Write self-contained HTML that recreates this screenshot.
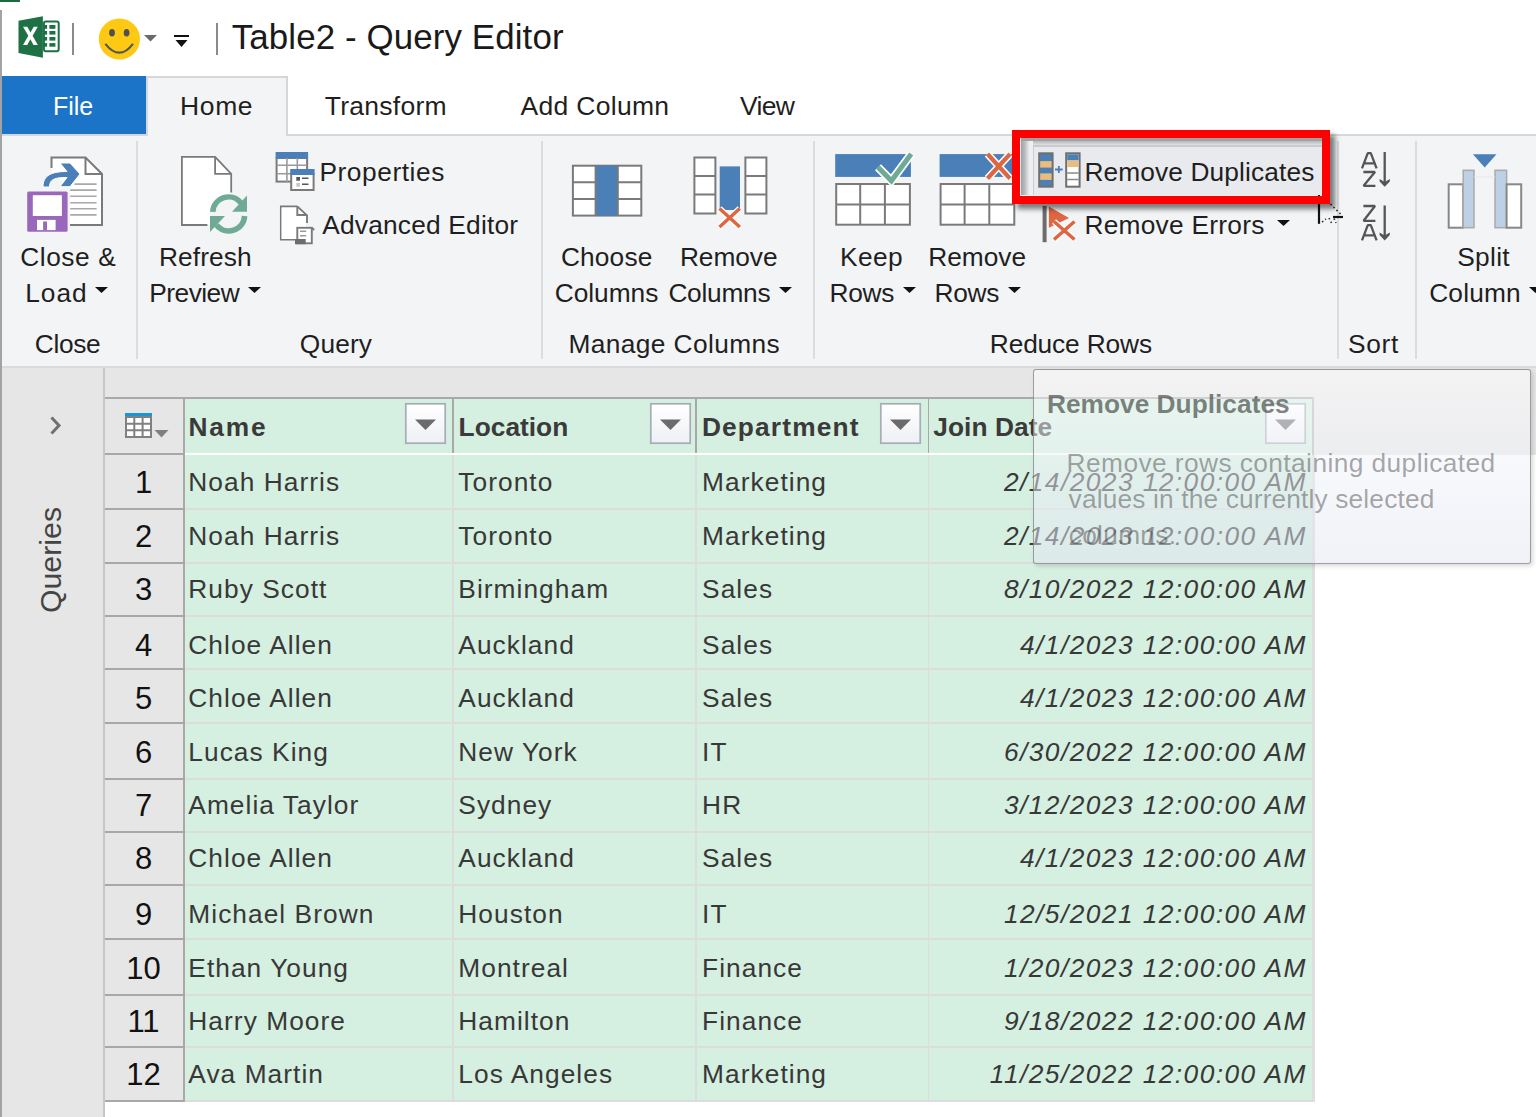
<!DOCTYPE html><html><head><meta charset="utf-8"><style>
html,body{margin:0;padding:0;}
body{width:1536px;height:1117px;overflow:hidden;position:relative;background:#fff;font-family:"Liberation Sans", sans-serif;}
.t{position:absolute;white-space:nowrap;line-height:1;}
.r{position:absolute;}
svg.r{overflow:visible;}
</style></head><body>
<div class="r" style="left:0.0px;top:0.0px;width:1536.0px;height:76.0px;background:#ffffff;"></div>
<div class="r" style="left:0.0px;top:0.0px;width:20.0px;height:2.0px;background:#1d6b3c;"></div>
<svg class="r" style="left:14.0px;top:12.0px;" width="50" height="50" viewBox="0 0 50 50">
<rect x="29.9" y="9.5" width="14.8" height="29.7" rx="2" fill="#fff" stroke="#1e7145" stroke-width="2"/>
<g fill="#1e7145">
<rect x="28.9" y="13" width="4.2" height="3.8"/><rect x="35.4" y="13" width="6" height="3.8"/>
<rect x="28.9" y="19" width="4.2" height="3.6"/><rect x="35.4" y="19" width="6" height="3.6"/>
<rect x="28.9" y="25" width="4.2" height="3.6"/><rect x="35.4" y="25" width="6" height="3.6"/>
<rect x="28.9" y="31.1" width="4.2" height="3.6"/><rect x="35.4" y="31.1" width="6" height="3.6"/>
</g>
<path d="M4.5 8.7 L28.9 4.3 L28.9 45.7 L4.5 41 Z" fill="#1e7145"/>
<path d="M9 14.8 h4.3 l3.2 5.6 l3.2 -5.6 h4.1 l-5.2 9 l5.2 9.1 h-4.3 l-3.1 -5.6 l-3.2 5.6 h-4.2 l5.3 -9.1 Z" fill="#fff"/>
</svg>
<div class="r" style="left:72.0px;top:23.0px;width:2.0px;height:32.0px;background:#8a8a8a;"></div>
<svg class="r" style="left:99.0px;top:18.0px;" width="41" height="41" viewBox="0 0 41 41">
<circle cx="20.4" cy="21" r="20.6" fill="#fdc913"/>
<ellipse cx="13" cy="14.8" rx="2.9" ry="3.8" fill="#505050"/><ellipse cx="27.6" cy="14.8" rx="2.9" ry="3.8" fill="#505050"/>
<path d="M6.3 25.8 Q20.4 43.5 34 25.8" fill="none" stroke="#555" stroke-width="2.1"/>
</svg>
<svg class="r" style="left:144.0px;top:35.0px;" width="13" height="7" viewBox="0 0 13 7"><path d="M0 0 H13 L6.5 6.5 Z" fill="#6a6a6a"/></svg>
<svg class="r" style="left:174.0px;top:35.0px;" width="16" height="13" viewBox="0 0 16 13"><rect x="0" y="0" width="15" height="2" fill="#111"/><path d="M1.5 5 H13.5 L7.5 12 Z" fill="#111"/></svg>
<div class="r" style="left:216.0px;top:22.5px;width:2.0px;height:32.5px;background:#8a8a8a;"></div>
<div class="t" style="left:231.7px;top:20.1px;font-size:34.9px;color:#1a1a1a;font-weight:normal;font-style:normal;letter-spacing:0.11px;">Table2 - Query Editor</div>
<div class="r" style="left:2.0px;top:76.0px;width:144.0px;height:58.0px;background:#1c74c8;"></div>
<div class="t" style="left:53.0px;top:93.8px;font-size:25px;color:#ffffff;font-weight:normal;font-style:normal;letter-spacing:-0.07px;">File</div>
<div class="r" style="left:0.0px;top:134.0px;width:1536.0px;height:2.0px;background:#d6d7d9;"></div>
<div class="r" style="left:146.0px;top:76.0px;width:142.0px;height:60.0px;background:#d6d7d9;"></div>
<div class="r" style="left:148.0px;top:78.0px;width:138.0px;height:59.0px;background:#f3f4f6;"></div>
<div class="t" style="left:180.0px;top:92.5px;font-size:26.5px;color:#1f1f1f;font-weight:normal;font-style:normal;letter-spacing:0.63px;">Home</div>
<div class="t" style="left:324.8px;top:92.5px;font-size:26.5px;color:#1f1f1f;font-weight:normal;font-style:normal;letter-spacing:0.26px;">Transform</div>
<div class="t" style="left:520.6px;top:92.5px;font-size:26.5px;color:#1f1f1f;font-weight:normal;font-style:normal;letter-spacing:0.29px;">Add Column</div>
<div class="t" style="left:739.9px;top:92.5px;font-size:26.5px;color:#1f1f1f;font-weight:normal;font-style:normal;letter-spacing:-0.63px;">View</div>
<div class="r" style="left:0.0px;top:136.0px;width:1536.0px;height:230.0px;background:#f3f4f6;"></div>
<div class="r" style="left:0.0px;top:365.5px;width:1536.0px;height:2.0px;background:#dadbdd;"></div>
<div class="r" style="left:136.0px;top:141.0px;width:1.5px;height:218.0px;background:#dcdcdc;"></div>
<div class="r" style="left:541.0px;top:141.0px;width:1.5px;height:218.0px;background:#dcdcdc;"></div>
<div class="r" style="left:813.0px;top:141.0px;width:1.5px;height:218.0px;background:#dcdcdc;"></div>
<div class="r" style="left:1337.0px;top:141.0px;width:1.5px;height:218.0px;background:#dcdcdc;"></div>
<div class="r" style="left:1415.0px;top:141.0px;width:1.5px;height:218.0px;background:#dcdcdc;"></div>
<div class="t" style="left:34.7px;top:330.5px;font-size:26.3px;color:#1f1f1f;font-weight:normal;font-style:normal;letter-spacing:-0.30px;">Close</div>
<div class="t" style="left:299.8px;top:330.5px;font-size:26.3px;color:#1f1f1f;font-weight:normal;font-style:normal;letter-spacing:0.15px;">Query</div>
<div class="t" style="left:568.4px;top:330.5px;font-size:26.3px;color:#1f1f1f;font-weight:normal;font-style:normal;letter-spacing:0.40px;">Manage Columns</div>
<div class="t" style="left:989.8px;top:330.5px;font-size:26.3px;color:#1f1f1f;font-weight:normal;font-style:normal;letter-spacing:-0.14px;">Reduce Rows</div>
<div class="t" style="left:1348.0px;top:330.5px;font-size:26.3px;color:#1f1f1f;font-weight:normal;font-style:normal;letter-spacing:0.67px;">Sort</div>
<div class="t" style="left:20.2px;top:244.4px;font-size:26.3px;color:#1f1f1f;font-weight:normal;font-style:normal;letter-spacing:0.57px;">Close &amp;</div>
<div class="t" style="left:25.2px;top:279.5px;font-size:26.3px;color:#1f1f1f;font-weight:normal;font-style:normal;letter-spacing:1.00px;">Load</div>
<svg class="r" style="left:94.5px;top:286.5px;" width="13" height="6" viewBox="0 0 13 6"><path d="M0 0 H13 L6.5 6 Z" fill="#111"/></svg>
<div class="t" style="left:158.9px;top:244.4px;font-size:26.3px;color:#1f1f1f;font-weight:normal;font-style:normal;letter-spacing:0.12px;">Refresh</div>
<div class="t" style="left:149.3px;top:279.5px;font-size:26.3px;color:#1f1f1f;font-weight:normal;font-style:normal;letter-spacing:-0.52px;">Preview</div>
<svg class="r" style="left:248.0px;top:286.5px;" width="13" height="6" viewBox="0 0 13 6"><path d="M0 0 H13 L6.5 6 Z" fill="#111"/></svg>
<div class="t" style="left:319.4px;top:158.6px;font-size:26.3px;color:#1f1f1f;font-weight:normal;font-style:normal;letter-spacing:0.57px;">Properties</div>
<div class="t" style="left:322.2px;top:211.5px;font-size:26.3px;color:#1f1f1f;font-weight:normal;font-style:normal;letter-spacing:0.21px;">Advanced Editor</div>
<div class="t" style="left:560.9px;top:244.4px;font-size:26.3px;color:#1f1f1f;font-weight:normal;font-style:normal;letter-spacing:0.16px;">Choose</div>
<div class="t" style="left:554.7px;top:279.5px;font-size:26.3px;color:#1f1f1f;font-weight:normal;font-style:normal;letter-spacing:-0.02px;">Columns</div>
<div class="t" style="left:679.9px;top:244.4px;font-size:26.3px;color:#1f1f1f;font-weight:normal;font-style:normal;letter-spacing:-0.06px;">Remove</div>
<div class="t" style="left:668.4px;top:279.5px;font-size:26.3px;color:#1f1f1f;font-weight:normal;font-style:normal;letter-spacing:-0.27px;">Columns</div>
<svg class="r" style="left:778.5px;top:286.5px;" width="13" height="6" viewBox="0 0 13 6"><path d="M0 0 H13 L6.5 6 Z" fill="#111"/></svg>
<div class="t" style="left:839.9px;top:244.4px;font-size:26.3px;color:#1f1f1f;font-weight:normal;font-style:normal;letter-spacing:0.47px;">Keep</div>
<div class="t" style="left:829.5px;top:279.5px;font-size:26.3px;color:#1f1f1f;font-weight:normal;font-style:normal;letter-spacing:-0.30px;">Rows</div>
<svg class="r" style="left:902.5px;top:286.5px;" width="13" height="6" viewBox="0 0 13 6"><path d="M0 0 H13 L6.5 6 Z" fill="#111"/></svg>
<div class="t" style="left:928.3px;top:244.4px;font-size:26.3px;color:#1f1f1f;font-weight:normal;font-style:normal;letter-spacing:-0.02px;">Remove</div>
<div class="t" style="left:934.5px;top:279.5px;font-size:26.3px;color:#1f1f1f;font-weight:normal;font-style:normal;letter-spacing:-0.30px;">Rows</div>
<svg class="r" style="left:1007.5px;top:286.5px;" width="13" height="6" viewBox="0 0 13 6"><path d="M0 0 H13 L6.5 6 Z" fill="#111"/></svg>
<div class="t" style="left:1457.3px;top:244.4px;font-size:26.3px;color:#1f1f1f;font-weight:normal;font-style:normal;letter-spacing:0.28px;">Split</div>
<div class="t" style="left:1429.2px;top:279.5px;font-size:26.3px;color:#1f1f1f;font-weight:normal;font-style:normal;letter-spacing:0.18px;">Column</div>
<svg class="r" style="left:1528.5px;top:286.5px;" width="13" height="6" viewBox="0 0 13 6"><path d="M0 0 H13 L6.5 6 Z" fill="#111"/></svg>
<svg class="r" style="left:20.0px;top:145.0px;" width="90" height="95" viewBox="0 0 90 95">
<path d="M31.5 12.5 H65.5 L82 29 V80 H50 V40 L31.5 30 Z" fill="#fff"/>
<path d="M31.5 23 V12.5 H65.5 L82 29 V80 H50" fill="none" stroke="#7a7a7a" stroke-width="2"/>
<path d="M65.5 12.5 V29 H82" fill="none" stroke="#7a7a7a" stroke-width="2"/>
<path d="M54.4 39.1 H76.6 M50.2 45.1 H76.6 M50.2 51.3 H76.6 M50.2 57.7 H76.6 M50.2 63.8 H76.6 M50.2 69.9 H76.6" stroke="#a8a8a8" stroke-width="1.6"/>
<path d="M23 42 C23 30 32 26.5 47 26.5 L40 18 H50 L60 29 L50 41.7 H40 L47 32.5 C35 32.5 29.5 34 29.5 42 Z" fill="#4a7fb7" stroke="#fff" stroke-width="1"/>
<rect x="7.2" y="46.4" width="40.4" height="40.4" rx="1.5" fill="#9a68ba"/>
<rect x="12.8" y="50.2" width="29.1" height="20.8" fill="#fff"/>
<rect x="17" y="74.9" width="18.6" height="10.2" fill="#fff"/>
<rect x="23.1" y="76.5" width="3.9" height="8.6" fill="#9a68ba"/>
</svg>
<svg class="r" style="left:170.0px;top:145.0px;" width="90" height="95" viewBox="0 0 90 95">
<path d="M11.9 11.9 H45.1 L61.2 28.9 V80 H11.9 Z" fill="#fff"/>
<path d="M61.2 47.6 V28.9 L45.1 11.9 H11.9 V80 H37.4" fill="none" stroke="#7a7a7a" stroke-width="1.8"/>
<path d="M45.1 11.9 V28.9 H61.2" fill="none" stroke="#7a7a7a" stroke-width="1.8"/>
<circle cx="58.7" cy="69" r="19" fill="#f3f4f6"/>
<path d="M42.8 66.8 A15.8 15.8 0 0 1 71 58" fill="none" stroke="#6faa94" stroke-width="5.6"/>
<path d="M62 66.8 H77 V50.6 Z" fill="#6faa94"/>
<path d="M74.6 71 A15.8 15.8 0 0 1 46.5 80" fill="none" stroke="#6faa94" stroke-width="5.6"/>
<path d="M40 71 H55 L40 87 Z" fill="#6faa94"/>
</svg>
<svg class="r" style="left:270.0px;top:145.0px;" width="50" height="105" viewBox="0 0 50 105">
<rect x="6.6" y="13" width="30.5" height="23.6" fill="#fff" stroke="#7a7a7a" stroke-width="2"/>
<rect x="5.6" y="7" width="32.5" height="6.5" fill="#4a7fb7"/>
<path d="M16.9 13 V37 M27.3 13 V24 M6.6 20.2 H37 M6.6 28.7 H20" stroke="#9a9a9a" stroke-width="1.6"/>
<rect x="21.2" y="29" width="22.4" height="16" fill="#fff" stroke="#7a7a7a" stroke-width="2"/>
<rect x="20.2" y="24" width="24.4" height="6" fill="#4a7fb7"/>
<rect x="26.3" y="32" width="3.7" height="3.7" fill="#555"/>
<rect x="26.3" y="38" width="3.7" height="3.7" fill="#c8c8c8"/>
<path d="M32 33.3 H38.5 M32 39.3 H38.5" stroke="#555" stroke-width="1.6"/>
<path d="M27.3 61.5 H10.9 V94.5 H26 M27.3 61.5 L37 70.5 V78" fill="#fff" stroke="#7a7a7a" stroke-width="1.9"/>
<path d="M11.5 62.5 H27 L36 71 V82 H26 V94 H11.5 Z" fill="#fff"/>
<path d="M27.3 61.5 V70 H37" fill="none" stroke="#7a7a7a" stroke-width="1.9"/>
<rect x="27.3" y="82.8" width="14.5" height="15.5" fill="#fff" stroke="#7a7a7a" stroke-width="1.9"/>
<path d="M41.8 82.8 L44.2 85" stroke="#7a7a7a" stroke-width="1.9"/>
<rect x="25" y="94" width="10.7" height="5.2" fill="#6d6d6d"/>
<path d="M30 86.2 H36.2 M30 90.7 H36.2" stroke="#9a9a9a" stroke-width="1.4"/>
</svg>
<svg class="r" style="left:571.0px;top:164.0px;" width="72" height="53" viewBox="0 0 72 53">
<rect x="1.9" y="1.7" width="68.4" height="49.9" fill="#fff" stroke="#7a7a7a" stroke-width="2"/>
<rect x="24.6" y="1.7" width="22.2" height="49.9" fill="#4a7fb7"/>
<path d="M24.6 1.7 V51.6 M46.8 1.7 V51.6 M1.9 18.2 H24.6 M46.8 18.2 H70.3 M1.9 35.1 H24.6 M46.8 35.1 H70.3" stroke="#7a7a7a" stroke-width="2"/>
</svg>
<svg class="r" style="left:690.0px;top:154.0px;" width="80" height="78" viewBox="0 0 80 78">
<rect x="4.4" y="3.5" width="21" height="56" fill="#fff" stroke="#7a7a7a" stroke-width="2"/>
<path d="M4.4 22 H25.4 M4.4 40.6 H25.4" stroke="#7a7a7a" stroke-width="2"/>
<rect x="29.7" y="12.4" width="20.3" height="43.6" fill="#4a7fb7"/>
<rect x="55.4" y="3.5" width="21" height="56" fill="#fff" stroke="#7a7a7a" stroke-width="2"/>
<path d="M55.4 22 H76.4 M55.4 40.6 H76.4" stroke="#7a7a7a" stroke-width="2"/>
<path d="M29.5 54.5 L49.8 73 M49.8 54.5 L29.5 73" stroke="#fff" stroke-width="6"/>
<path d="M29.5 54.5 L49.8 73 M49.8 54.5 L29.5 73" stroke="#dd6643" stroke-width="3.5"/>
</svg>
<svg class="r" style="left:825.0px;top:145.0px;" width="200" height="90" viewBox="0 0 200 90">
<rect x="10.2" y="9.1" width="75.7" height="22.8" fill="#4a7fb7"/>
<rect x="11.2" y="39" width="73.7" height="40.7" fill="#fff" stroke="#7a7a7a" stroke-width="2"/>
<path d="M35.2 39 V79.7 M59.9 39 V79.7 M11.2 59.6 H84.9" stroke="#7a7a7a" stroke-width="2"/>

<rect x="114.60000000000001" y="9.1" width="75.7" height="22.8" fill="#4a7fb7"/>
<rect x="115.60000000000001" y="39" width="73.7" height="40.7" fill="#fff" stroke="#7a7a7a" stroke-width="2"/>
<path d="M139.60000000000002 39 V79.7 M164.3 39 V79.7 M115.60000000000001 59.6 H189.3" stroke="#7a7a7a" stroke-width="2"/>

<path d="M53 22.3 L66.4 35.8 L86.2 9" fill="none" stroke="#fff" stroke-width="8.5"/>
<path d="M53 22.3 L66.4 35.8 L86.2 9" fill="none" stroke="#6faa94" stroke-width="5"/>
<path d="M162.5 9 L185 33.5 M162.5 33.5 L185 9" stroke="#fff" stroke-width="7.5"/>
<path d="M162.5 9 L185 33.5 M162.5 33.5 L185 9" stroke="#dd6643" stroke-width="4.2"/>
</svg>
<svg class="r" style="left:1440.0px;top:150.0px;" width="90" height="82" viewBox="0 0 90 82">
<rect x="8.7" y="34.3" width="14.5" height="43.4" fill="#fff" stroke="#888" stroke-width="2"/>
<rect x="23.2" y="20.3" width="10.8" height="57.4" fill="#bdd0e6" stroke="#aaa" stroke-width="1.5"/>
<rect x="55" y="20.3" width="11.6" height="57.4" fill="#bdd0e6" stroke="#aaa" stroke-width="1.5"/>
<rect x="66.6" y="34.3" width="14.6" height="43.4" fill="#fff" stroke="#888" stroke-width="2"/>
<path d="M34 27 H55" stroke="#e8e8e8" stroke-width="1"/>
<path d="M32.9 4.3 H56.5 L44.7 17.6 Z" fill="#4a7fb7"/>
</svg>
<svg class="r" style="left:1350.0px;top:145.0px;" width="50" height="100" viewBox="0 0 50 100">
<g fill="none" stroke="#555" stroke-width="2.3" stroke-linejoin="bevel">
<path d="M12 23.3 L17.8 8.2 H20.8 L26.6 23.3 M14.8 18.3 H23.8"/>
<path d="M13.4 27 H25 L13.6 40.8 H25.4"/>
<path d="M13.4 61 H25 L13.6 75.8 H25.4"/>
<path d="M12 95.3 L17.8 80.2 H20.8 L26.6 95.3 M14.8 90.3 H23.8"/>
<path d="M34.7 7 V37 M34.7 60.5 V91"/>
</g>
<path d="M29.6 34 L34.7 37 L39.8 34 L39.8 36.5 L34.7 41.8 L29.6 36.5 Z" fill="#555"/>
<path d="M29.6 87.5 L34.7 90.5 L39.8 87.5 L39.8 90 L34.7 95.4 L29.6 90 Z" fill="#555"/>
</svg>
<svg class="r" style="left:1040.0px;top:204.0px;" width="40" height="42" viewBox="0 0 40 42">
<rect x="2.6" y="1.9" width="4" height="36.3" fill="#6d6d6d"/>
<path d="M8.9 2.5 L29 14 L8.9 23.8 Z" fill="#dd6643"/>
<path d="M14 17.5 L34.5 35.5 M34.5 17.5 L14 35.5" stroke="#fff" stroke-width="6"/>
<path d="M14 17.5 L34.5 35.5 M34.5 17.5 L14 35.5" stroke="#dd6643" stroke-width="3.6"/>
</svg>
<div class="t" style="left:1084.4px;top:212.0px;font-size:26.3px;color:#1f1f1f;font-weight:normal;font-style:normal;letter-spacing:0.26px;">Remove Errors</div>
<svg class="r" style="left:1277.0px;top:220.0px;" width="13" height="6" viewBox="0 0 13 6"><path d="M0 0 H13 L6.5 6 Z" fill="#111"/></svg>
<div class="r" style="left:0.0px;top:367.5px;width:1536.0px;height:749.5px;background:#ffffff;"></div>
<div class="r" style="left:2.0px;top:367.5px;width:101.0px;height:749.5px;background:#e6e6e6;"></div>
<div class="r" style="left:103.0px;top:367.5px;width:2.0px;height:749.5px;background:#c6c6c6;"></div>
<div class="r" style="left:105.0px;top:367.5px;width:1431.0px;height:30.5px;background:#e6e6e6;"></div>
<div class="r" style="left:1313.0px;top:398.0px;width:223.0px;height:56.6px;background:#e6e6e6;"></div>
<div class="r" style="left:105.0px;top:397.0px;width:1208.0px;height:2.0px;background:#a9a9a9;"></div>
<div class="r" style="left:105.0px;top:399.0px;width:78.0px;height:55.6px;background:#e6e6e6;"></div>
<div class="r" style="left:185.0px;top:399.0px;width:1128.0px;height:53.6px;background:#d5efe0;"></div>
<div class="r" style="left:185.0px;top:452.6px;width:1128.0px;height:2.0px;background:#ffffff;"></div>
<div class="r" style="left:1312.0px;top:397.0px;width:2.0px;height:57.6px;background:#b4b4b4;"></div>
<div class="r" style="left:105.0px;top:454.6px;width:78.0px;height:647.8px;background:#e6e6e6;"></div>
<div class="r" style="left:185.0px;top:454.6px;width:1128.0px;height:647.8px;background:#d5efe0;"></div>
<div class="r" style="left:105.0px;top:507.9px;width:78.0px;height:2.0px;background:#a8a8a8;"></div>
<div class="r" style="left:185.0px;top:507.9px;width:1128.0px;height:2.0px;background:#dcdcdc;"></div>
<div class="r" style="left:105.0px;top:561.8px;width:78.0px;height:2.0px;background:#a8a8a8;"></div>
<div class="r" style="left:185.0px;top:561.8px;width:1128.0px;height:2.0px;background:#dcdcdc;"></div>
<div class="r" style="left:105.0px;top:614.7px;width:78.0px;height:2.0px;background:#a8a8a8;"></div>
<div class="r" style="left:185.0px;top:614.7px;width:1128.0px;height:2.0px;background:#dcdcdc;"></div>
<div class="r" style="left:105.0px;top:668.3px;width:78.0px;height:2.0px;background:#a8a8a8;"></div>
<div class="r" style="left:185.0px;top:668.3px;width:1128.0px;height:2.0px;background:#dcdcdc;"></div>
<div class="r" style="left:105.0px;top:721.8px;width:78.0px;height:2.0px;background:#a8a8a8;"></div>
<div class="r" style="left:185.0px;top:721.8px;width:1128.0px;height:2.0px;background:#dcdcdc;"></div>
<div class="r" style="left:105.0px;top:777.6px;width:78.0px;height:2.0px;background:#a8a8a8;"></div>
<div class="r" style="left:185.0px;top:777.6px;width:1128.0px;height:2.0px;background:#dcdcdc;"></div>
<div class="r" style="left:105.0px;top:830.8px;width:78.0px;height:2.0px;background:#a8a8a8;"></div>
<div class="r" style="left:185.0px;top:830.8px;width:1128.0px;height:2.0px;background:#dcdcdc;"></div>
<div class="r" style="left:105.0px;top:884.3px;width:78.0px;height:2.0px;background:#a8a8a8;"></div>
<div class="r" style="left:185.0px;top:884.3px;width:1128.0px;height:2.0px;background:#dcdcdc;"></div>
<div class="r" style="left:105.0px;top:937.9px;width:78.0px;height:2.0px;background:#a8a8a8;"></div>
<div class="r" style="left:185.0px;top:937.9px;width:1128.0px;height:2.0px;background:#dcdcdc;"></div>
<div class="r" style="left:105.0px;top:993.5px;width:78.0px;height:2.0px;background:#a8a8a8;"></div>
<div class="r" style="left:185.0px;top:993.5px;width:1128.0px;height:2.0px;background:#dcdcdc;"></div>
<div class="r" style="left:105.0px;top:1046.4px;width:78.0px;height:2.0px;background:#a8a8a8;"></div>
<div class="r" style="left:185.0px;top:1046.4px;width:1128.0px;height:2.0px;background:#dcdcdc;"></div>
<div class="r" style="left:105.0px;top:1100.4px;width:78.0px;height:2.0px;background:#a8a8a8;"></div>
<div class="r" style="left:185.0px;top:1100.4px;width:1128.0px;height:2.0px;background:#dcdcdc;"></div>
<div class="r" style="left:105.0px;top:452.6px;width:78.0px;height:2.0px;background:#a8a8a8;"></div>
<div class="r" style="left:182.9px;top:397.0px;width:2.1px;height:705.4px;background:#a8a8a8;"></div>
<div class="r" style="left:1312.0px;top:454.6px;width:2.5px;height:647.8px;background:#dedede;"></div>
<div class="r" style="left:452.2px;top:399.0px;width:1.5px;height:53.6px;background:#a8a8a8;"></div>
<div class="r" style="left:452.2px;top:454.6px;width:1.5px;height:647.8px;background:#dcdcdc;"></div>
<div class="r" style="left:695.2px;top:399.0px;width:1.5px;height:53.6px;background:#a8a8a8;"></div>
<div class="r" style="left:695.2px;top:454.6px;width:1.5px;height:647.8px;background:#dcdcdc;"></div>
<div class="r" style="left:927.6px;top:399.0px;width:1.5px;height:53.6px;background:#a8a8a8;"></div>
<div class="r" style="left:927.6px;top:454.6px;width:1.5px;height:647.8px;background:#dcdcdc;"></div>
<svg class="r" style="left:125.0px;top:413.0px;" width="44" height="25" viewBox="0 0 44 25">
<rect x="0" y="0" width="27" height="4" fill="#1a96d4"/>
<rect x="1" y="4" width="25" height="20" fill="#fff" stroke="#808080" stroke-width="2"/>
<path d="M9.3 4 V24 M17.6 4 V24 M1 10.7 H26 M1 17.3 H26" stroke="#808080" stroke-width="2"/>
<path d="M29.5 17 H43.5 L36.5 24.5 Z" fill="#808080"/>
</svg>
<div class="t" style="left:188.5px;top:413.5px;font-size:26.3px;color:#3a3a3a;font-weight:bold;font-style:normal;letter-spacing:1.80px;">Name</div>
<svg class="r" style="left:405.2px;top:403.2px;" width="41" height="41" viewBox="0 0 41 41">
<defs><linearGradient id="fg1" x1="0" y1="0" x2="0" y2="1"><stop offset="0" stop-color="#ffffff"/><stop offset="1" stop-color="#edf0f5"/></linearGradient></defs>
<rect x="0.8" y="0.8" width="39.4" height="39.4" fill="url(#fg1)" stroke="#a7adb6" stroke-width="1.7"/>
<path d="M10 16.5 H31 L20.5 27 Z" fill="#6b6b6b"/>
</svg>
<div class="t" style="left:458.6px;top:413.5px;font-size:26.3px;color:#3a3a3a;font-weight:bold;font-style:normal;letter-spacing:0.01px;">Location</div>
<svg class="r" style="left:650.2px;top:403.2px;" width="41" height="41" viewBox="0 0 41 41">
<defs><linearGradient id="fg2" x1="0" y1="0" x2="0" y2="1"><stop offset="0" stop-color="#ffffff"/><stop offset="1" stop-color="#edf0f5"/></linearGradient></defs>
<rect x="0.8" y="0.8" width="39.4" height="39.4" fill="url(#fg2)" stroke="#a7adb6" stroke-width="1.7"/>
<path d="M10 16.5 H31 L20.5 27 Z" fill="#6b6b6b"/>
</svg>
<div class="t" style="left:701.9px;top:413.5px;font-size:26.3px;color:#3a3a3a;font-weight:bold;font-style:normal;letter-spacing:1.17px;">Department</div>
<svg class="r" style="left:880.4px;top:403.2px;" width="41" height="41" viewBox="0 0 41 41">
<defs><linearGradient id="fg3" x1="0" y1="0" x2="0" y2="1"><stop offset="0" stop-color="#ffffff"/><stop offset="1" stop-color="#edf0f5"/></linearGradient></defs>
<rect x="0.8" y="0.8" width="39.4" height="39.4" fill="url(#fg3)" stroke="#a7adb6" stroke-width="1.7"/>
<path d="M10 16.5 H31 L20.5 27 Z" fill="#6b6b6b"/>
</svg>
<div class="t" style="left:933.3px;top:413.5px;font-size:26.3px;color:#3a3a3a;font-weight:bold;font-style:normal;letter-spacing:0.06px;">Join Date</div>
<svg class="r" style="left:1265.0px;top:403.2px;" width="41" height="41" viewBox="0 0 41 41">
<defs><linearGradient id="fg4" x1="0" y1="0" x2="0" y2="1"><stop offset="0" stop-color="#ffffff"/><stop offset="1" stop-color="#edf0f5"/></linearGradient></defs>
<rect x="0.8" y="0.8" width="39.4" height="39.4" fill="url(#fg4)" stroke="#a7adb6" stroke-width="1.7"/>
<path d="M10 16.5 H31 L20.5 27 Z" fill="#6b6b6b"/>
</svg>
<div class="t" style="left:-356.5px;width:1000px;text-align:center;top:467.1px;font-size:31px;color:#111;font-weight:normal;font-style:normal;">1</div>
<div class="t" style="left:188.3px;top:469.2px;font-size:26.3px;color:#383838;font-weight:normal;font-style:normal;letter-spacing:1.05px;">Noah Harris</div>
<div class="t" style="left:458.3px;top:469.2px;font-size:26.3px;color:#383838;font-weight:normal;font-style:normal;letter-spacing:1.05px;">Toronto</div>
<div class="t" style="left:702.1px;top:469.2px;font-size:26.3px;color:#383838;font-weight:normal;font-style:normal;letter-spacing:1.05px;">Marketing</div>
<div class="t" style="right:229.2px;top:469.2px;font-size:26.3px;color:#383838;font-weight:normal;font-style:italic;letter-spacing:1.45px;">2/14/2023 12:00:00 AM</div>
<div class="t" style="left:-356.5px;width:1000px;text-align:center;top:520.5px;font-size:31px;color:#111;font-weight:normal;font-style:normal;">2</div>
<div class="t" style="left:188.3px;top:522.6px;font-size:26.3px;color:#383838;font-weight:normal;font-style:normal;letter-spacing:1.05px;">Noah Harris</div>
<div class="t" style="left:458.3px;top:522.6px;font-size:26.3px;color:#383838;font-weight:normal;font-style:normal;letter-spacing:1.05px;">Toronto</div>
<div class="t" style="left:702.1px;top:522.6px;font-size:26.3px;color:#383838;font-weight:normal;font-style:normal;letter-spacing:1.05px;">Marketing</div>
<div class="t" style="right:229.2px;top:522.6px;font-size:26.3px;color:#383838;font-weight:normal;font-style:italic;letter-spacing:1.45px;">2/14/2023 12:00:00 AM</div>
<div class="t" style="left:-356.5px;width:1000px;text-align:center;top:574.2px;font-size:31px;color:#111;font-weight:normal;font-style:normal;">3</div>
<div class="t" style="left:188.3px;top:576.3px;font-size:26.3px;color:#383838;font-weight:normal;font-style:normal;letter-spacing:1.05px;">Ruby Scott</div>
<div class="t" style="left:458.3px;top:576.3px;font-size:26.3px;color:#383838;font-weight:normal;font-style:normal;letter-spacing:1.05px;">Birmingham</div>
<div class="t" style="left:702.1px;top:576.3px;font-size:26.3px;color:#383838;font-weight:normal;font-style:normal;letter-spacing:1.05px;">Sales</div>
<div class="t" style="right:229.2px;top:576.3px;font-size:26.3px;color:#383838;font-weight:normal;font-style:italic;letter-spacing:1.45px;">8/10/2022 12:00:00 AM</div>
<div class="t" style="left:-356.5px;width:1000px;text-align:center;top:629.5px;font-size:31px;color:#111;font-weight:normal;font-style:normal;">4</div>
<div class="t" style="left:188.3px;top:631.6px;font-size:26.3px;color:#383838;font-weight:normal;font-style:normal;letter-spacing:1.05px;">Chloe Allen</div>
<div class="t" style="left:458.3px;top:631.6px;font-size:26.3px;color:#383838;font-weight:normal;font-style:normal;letter-spacing:1.05px;">Auckland</div>
<div class="t" style="left:702.1px;top:631.6px;font-size:26.3px;color:#383838;font-weight:normal;font-style:normal;letter-spacing:1.05px;">Sales</div>
<div class="t" style="right:229.2px;top:631.6px;font-size:26.3px;color:#383838;font-weight:normal;font-style:italic;letter-spacing:1.45px;">4/1/2023 12:00:00 AM</div>
<div class="t" style="left:-356.5px;width:1000px;text-align:center;top:683.2px;font-size:31px;color:#111;font-weight:normal;font-style:normal;">5</div>
<div class="t" style="left:188.3px;top:685.3px;font-size:26.3px;color:#383838;font-weight:normal;font-style:normal;letter-spacing:1.05px;">Chloe Allen</div>
<div class="t" style="left:458.3px;top:685.3px;font-size:26.3px;color:#383838;font-weight:normal;font-style:normal;letter-spacing:1.05px;">Auckland</div>
<div class="t" style="left:702.1px;top:685.3px;font-size:26.3px;color:#383838;font-weight:normal;font-style:normal;letter-spacing:1.05px;">Sales</div>
<div class="t" style="right:229.2px;top:685.3px;font-size:26.3px;color:#383838;font-weight:normal;font-style:italic;letter-spacing:1.45px;">4/1/2023 12:00:00 AM</div>
<div class="t" style="left:-356.5px;width:1000px;text-align:center;top:736.5px;font-size:31px;color:#111;font-weight:normal;font-style:normal;">6</div>
<div class="t" style="left:188.3px;top:738.6px;font-size:26.3px;color:#383838;font-weight:normal;font-style:normal;letter-spacing:1.05px;">Lucas King</div>
<div class="t" style="left:458.3px;top:738.6px;font-size:26.3px;color:#383838;font-weight:normal;font-style:normal;letter-spacing:1.05px;">New York</div>
<div class="t" style="left:702.1px;top:738.6px;font-size:26.3px;color:#383838;font-weight:normal;font-style:normal;letter-spacing:1.05px;">IT</div>
<div class="t" style="right:229.2px;top:738.6px;font-size:26.3px;color:#383838;font-weight:normal;font-style:italic;letter-spacing:1.45px;">6/30/2022 12:00:00 AM</div>
<div class="t" style="left:-356.5px;width:1000px;text-align:center;top:790.2px;font-size:31px;color:#111;font-weight:normal;font-style:normal;">7</div>
<div class="t" style="left:188.3px;top:792.3px;font-size:26.3px;color:#383838;font-weight:normal;font-style:normal;letter-spacing:1.05px;">Amelia Taylor</div>
<div class="t" style="left:458.3px;top:792.3px;font-size:26.3px;color:#383838;font-weight:normal;font-style:normal;letter-spacing:1.05px;">Sydney</div>
<div class="t" style="left:702.1px;top:792.3px;font-size:26.3px;color:#383838;font-weight:normal;font-style:normal;letter-spacing:1.05px;">HR</div>
<div class="t" style="right:229.2px;top:792.3px;font-size:26.3px;color:#383838;font-weight:normal;font-style:italic;letter-spacing:1.45px;">3/12/2023 12:00:00 AM</div>
<div class="t" style="left:-356.5px;width:1000px;text-align:center;top:843.1px;font-size:31px;color:#111;font-weight:normal;font-style:normal;">8</div>
<div class="t" style="left:188.3px;top:845.2px;font-size:26.3px;color:#383838;font-weight:normal;font-style:normal;letter-spacing:1.05px;">Chloe Allen</div>
<div class="t" style="left:458.3px;top:845.2px;font-size:26.3px;color:#383838;font-weight:normal;font-style:normal;letter-spacing:1.05px;">Auckland</div>
<div class="t" style="left:702.1px;top:845.2px;font-size:26.3px;color:#383838;font-weight:normal;font-style:normal;letter-spacing:1.05px;">Sales</div>
<div class="t" style="right:229.2px;top:845.2px;font-size:26.3px;color:#383838;font-weight:normal;font-style:italic;letter-spacing:1.45px;">4/1/2023 12:00:00 AM</div>
<div class="t" style="left:-356.5px;width:1000px;text-align:center;top:899.2px;font-size:31px;color:#111;font-weight:normal;font-style:normal;">9</div>
<div class="t" style="left:188.3px;top:901.3px;font-size:26.3px;color:#383838;font-weight:normal;font-style:normal;letter-spacing:1.05px;">Michael Brown</div>
<div class="t" style="left:458.3px;top:901.3px;font-size:26.3px;color:#383838;font-weight:normal;font-style:normal;letter-spacing:1.05px;">Houston</div>
<div class="t" style="left:702.1px;top:901.3px;font-size:26.3px;color:#383838;font-weight:normal;font-style:normal;letter-spacing:1.05px;">IT</div>
<div class="t" style="right:229.2px;top:901.3px;font-size:26.3px;color:#383838;font-weight:normal;font-style:italic;letter-spacing:1.45px;">12/5/2021 12:00:00 AM</div>
<div class="t" style="left:-356.5px;width:1000px;text-align:center;top:952.5px;font-size:31px;color:#111;font-weight:normal;font-style:normal;">10</div>
<div class="t" style="left:188.3px;top:954.6px;font-size:26.3px;color:#383838;font-weight:normal;font-style:normal;letter-spacing:1.05px;">Ethan Young</div>
<div class="t" style="left:458.3px;top:954.6px;font-size:26.3px;color:#383838;font-weight:normal;font-style:normal;letter-spacing:1.05px;">Montreal</div>
<div class="t" style="left:702.1px;top:954.6px;font-size:26.3px;color:#383838;font-weight:normal;font-style:normal;letter-spacing:1.05px;">Finance</div>
<div class="t" style="right:229.2px;top:954.6px;font-size:26.3px;color:#383838;font-weight:normal;font-style:italic;letter-spacing:1.45px;">1/20/2023 12:00:00 AM</div>
<div class="t" style="left:-356.5px;width:1000px;text-align:center;top:1005.7px;font-size:31px;color:#111;font-weight:normal;font-style:normal;">11</div>
<div class="t" style="left:188.3px;top:1007.8px;font-size:26.3px;color:#383838;font-weight:normal;font-style:normal;letter-spacing:1.05px;">Harry Moore</div>
<div class="t" style="left:458.3px;top:1007.8px;font-size:26.3px;color:#383838;font-weight:normal;font-style:normal;letter-spacing:1.05px;">Hamilton</div>
<div class="t" style="left:702.1px;top:1007.8px;font-size:26.3px;color:#383838;font-weight:normal;font-style:normal;letter-spacing:1.05px;">Finance</div>
<div class="t" style="right:229.2px;top:1007.8px;font-size:26.3px;color:#383838;font-weight:normal;font-style:italic;letter-spacing:1.45px;">9/18/2022 12:00:00 AM</div>
<div class="t" style="left:-356.5px;width:1000px;text-align:center;top:1059.2px;font-size:31px;color:#111;font-weight:normal;font-style:normal;">12</div>
<div class="t" style="left:188.3px;top:1061.3px;font-size:26.3px;color:#383838;font-weight:normal;font-style:normal;letter-spacing:1.05px;">Ava Martin</div>
<div class="t" style="left:458.3px;top:1061.3px;font-size:26.3px;color:#383838;font-weight:normal;font-style:normal;letter-spacing:1.05px;">Los Angeles</div>
<div class="t" style="left:702.1px;top:1061.3px;font-size:26.3px;color:#383838;font-weight:normal;font-style:normal;letter-spacing:1.05px;">Marketing</div>
<div class="t" style="right:229.2px;top:1061.3px;font-size:26.3px;color:#383838;font-weight:normal;font-style:italic;letter-spacing:1.45px;">11/25/2022 12:00:00 AM</div>
<svg class="r" style="left:50.0px;top:416.0px;" width="11" height="19" viewBox="0 0 11 19"><path d="M1.5 1.5 L9 9.5 L1.5 17.5" fill="none" stroke="#707070" stroke-width="3"/></svg>
<div class="t" style="left:51px;top:560px;font-size:30.3px;color:#444;transform:translate(-50%,-50%) rotate(-90deg);transform-origin:center;">Queries</div>
<svg class="r" style="left:1310.0px;top:185.0px;" width="40" height="45" viewBox="0 0 40 45">
<path d="M9 6.5 V38.8" stroke="#111" stroke-width="2.2"/>
<path d="M23 32 H33" stroke="#111" stroke-width="2.2"/>
<path d="M20.5 19 L31 29.5" stroke="#333" stroke-width="1.6" stroke-dasharray="1.6 2.6"/>
<path d="M12 37 L16 34 M19 33 L22 39 M24 33.5 L26 38" stroke="#333" stroke-width="1.6" stroke-dasharray="1.6 2.4"/>
</svg>
<div class="r" style="left:1012.0px;top:129.5px;width:318.0px;height:74.0px;background:transparent;box-sizing:border-box;border:8.5px solid #ff0000;box-shadow:5px 5px 5px rgba(0,0,0,0.5);"></div>
<div class="r" style="left:1020.5px;top:138.0px;width:301.0px;height:57.0px;background:#e9eaed;"></div>
<div class="r" style="left:1020.5px;top:138.0px;width:301.0px;height:8.0px;background:linear-gradient(#9ea2a4,#b6babc 40%,#d6d8da 75%,#e2e3e6);"></div>
<div class="r" style="left:1020.5px;top:138.0px;width:12.5px;height:57.0px;background:linear-gradient(to right,#9ea2a4,#b6babc 30%,#d2d4d6 50%,#eceef0 70%,#eff0f2);"></div>
<div class="r" style="left:1020.5px;top:138.0px;width:301.0px;height:3.0px;background:#9ea2a4;"></div>
<div class="r" style="left:1032.5px;top:145.0px;width:1.5px;height:50.0px;background:#c9cbcd;"></div>
<div class="r" style="left:1032.5px;top:145.0px;width:289.0px;height:1.5px;background:#c9cbcd;"></div>
<svg class="r" style="left:1036.0px;top:150.0px;" width="46" height="40" viewBox="0 0 46 40">
<rect x="3.2" y="3.3" width="13.4" height="33.4" fill="#4a7fb7" stroke="#6f6f6f" stroke-width="2"/>
<rect x="4.2" y="11.1" width="11.4" height="6.5" fill="#e9bd7f"/>
<rect x="4.2" y="23.4" width="11.4" height="6.5" fill="#e9bd7f"/>
<path d="M19 19.5 H26.7 M22.85 16 V23" stroke="#4a7fb7" stroke-width="1.8"/>
<rect x="30.2" y="3.3" width="13.4" height="33.4" fill="#fff" stroke="#6f6f6f" stroke-width="2"/>
<rect x="31.2" y="4.3" width="11.4" height="6.2" fill="#4a7fb7"/>
<rect x="31.2" y="10.5" width="11.4" height="6.5" fill="#e9bd7f"/>
<path d="M31.2 23 H42.6 M31.2 29.5 H42.6" stroke="#8a8a8a" stroke-width="1.6"/>
</svg>
<div class="t" style="left:1084.4px;top:158.7px;font-size:26.3px;color:#1f1f1f;font-weight:normal;font-style:normal;letter-spacing:0.12px;">Remove Duplicates</div>
<div class="r" style="left:0.0px;top:10.0px;width:2.0px;height:1107.0px;background:#a3a3a3;"></div>
<div class="r" style="left:1033px;top:369px;width:498px;height:195px;box-sizing:border-box;border:1.5px solid rgba(120,120,120,0.7);border-radius:3px;background:linear-gradient(rgba(255,255,255,0.5),rgba(226,229,242,0.5));box-shadow:2px 2px 4px rgba(0,0,0,0.15);"></div>
<div class="t" style="left:1046.9px;top:390.8px;font-size:26.3px;color:rgba(45,50,45,0.6);font-weight:bold;font-style:normal;letter-spacing:0.01px;">Remove Duplicates</div>
<div class="t" style="left:1066.6px;top:450.2px;font-size:26.3px;color:rgba(60,60,60,0.45);font-weight:normal;font-style:normal;letter-spacing:0.42px;">Remove rows containing duplicated</div>
<div class="t" style="left:1068.6px;top:485.5px;font-size:26.3px;color:rgba(60,60,60,0.45);font-weight:normal;font-style:normal;letter-spacing:0.15px;">values in the currently selected</div>
<div class="t" style="left:1068.7px;top:521.7px;font-size:26.3px;color:rgba(60,60,60,0.45);font-weight:normal;font-style:normal;letter-spacing:0.30px;">columns.</div>
</body></html>
